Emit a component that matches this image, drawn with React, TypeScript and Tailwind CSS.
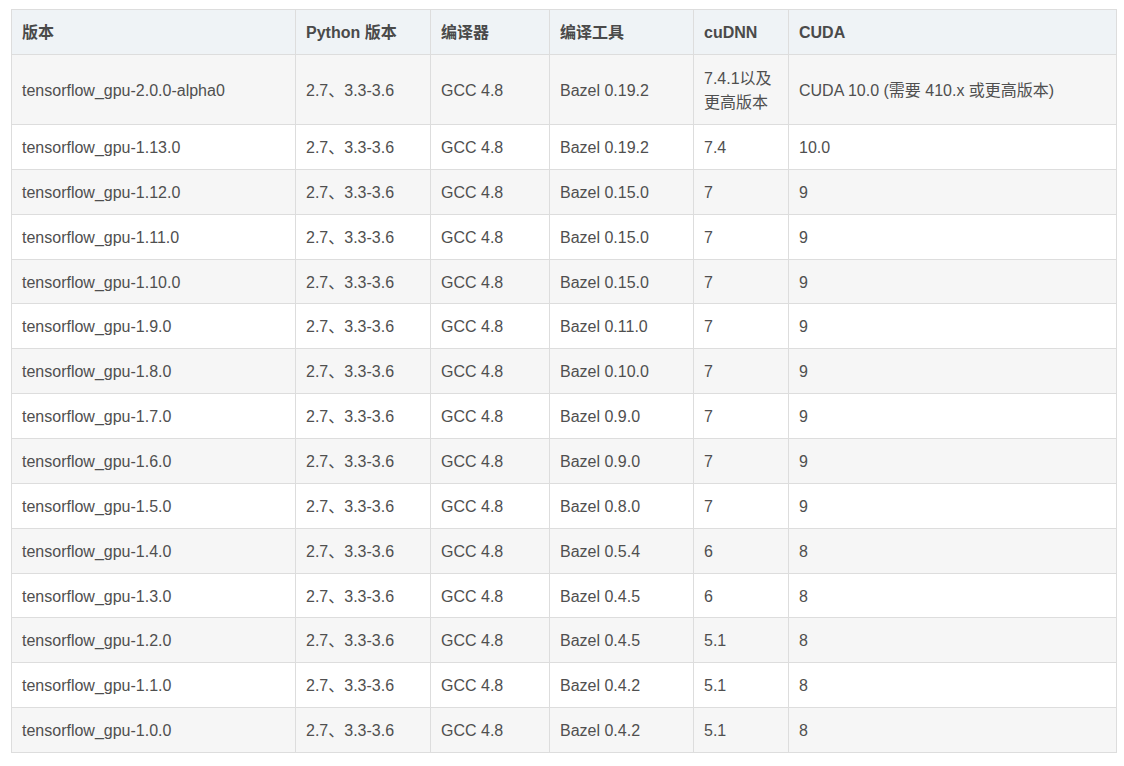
import React from 'react'

const headers = ['版本', 'Python 版本', '编译器', '编译工具', 'cuDNN', 'CUDA']

const rows: string[][] = [
  ['tensorflow_gpu-2.0.0-alpha0', '2.7、3.3-3.6', 'GCC 4.8', 'Bazel 0.19.2', '7.4.1以及更高版本', 'CUDA 10.0 (需要 410.x 或更高版本)'],
  ['tensorflow_gpu-1.13.0', '2.7、3.3-3.6', 'GCC 4.8', 'Bazel 0.19.2', '7.4', '10.0'],
  ['tensorflow_gpu-1.12.0', '2.7、3.3-3.6', 'GCC 4.8', 'Bazel 0.15.0', '7', '9'],
  ['tensorflow_gpu-1.11.0', '2.7、3.3-3.6', 'GCC 4.8', 'Bazel 0.15.0', '7', '9'],
  ['tensorflow_gpu-1.10.0', '2.7、3.3-3.6', 'GCC 4.8', 'Bazel 0.15.0', '7', '9'],
  ['tensorflow_gpu-1.9.0', '2.7、3.3-3.6', 'GCC 4.8', 'Bazel 0.11.0', '7', '9'],
  ['tensorflow_gpu-1.8.0', '2.7、3.3-3.6', 'GCC 4.8', 'Bazel 0.10.0', '7', '9'],
  ['tensorflow_gpu-1.7.0', '2.7、3.3-3.6', 'GCC 4.8', 'Bazel 0.9.0', '7', '9'],
  ['tensorflow_gpu-1.6.0', '2.7、3.3-3.6', 'GCC 4.8', 'Bazel 0.9.0', '7', '9'],
  ['tensorflow_gpu-1.5.0', '2.7、3.3-3.6', 'GCC 4.8', 'Bazel 0.8.0', '7', '9'],
  ['tensorflow_gpu-1.4.0', '2.7、3.3-3.6', 'GCC 4.8', 'Bazel 0.5.4', '6', '8'],
  ['tensorflow_gpu-1.3.0', '2.7、3.3-3.6', 'GCC 4.8', 'Bazel 0.4.5', '6', '8'],
  ['tensorflow_gpu-1.2.0', '2.7、3.3-3.6', 'GCC 4.8', 'Bazel 0.4.5', '5.1', '8'],
  ['tensorflow_gpu-1.1.0', '2.7、3.3-3.6', 'GCC 4.8', 'Bazel 0.4.2', '5.1', '8'],
  ['tensorflow_gpu-1.0.0', '2.7、3.3-3.6', 'GCC 4.8', 'Bazel 0.4.2', '5.1', '8'],
]

export default function App() {
  return (
    <div className="min-h-screen bg-white pl-[11px] pt-[9px] font-['Liberation_Sans','Noto_Sans_CJK_SC',sans-serif] text-[16px] leading-[23.86px] text-[#4f4f4f]">
      <table className="w-[1105px] table-fixed border-collapse">
        <colgroup>
          <col className="w-[284px]" />
          <col className="w-[135px]" />
          <col className="w-[119px]" />
          <col className="w-[144px]" />
          <col className="w-[95px]" />
          <col className="w-[328px]" />
        </colgroup>
        <thead>
          <tr className="h-[45px] bg-[#eff3f6]">
            {headers.map((h) => (
              <th
                key={h}
                className="border border-[#dddddd] px-[10px] pt-[11px] pb-[9px] text-left font-bold text-[#4a4a4a]"
              >
                {h}
              </th>
            ))}
          </tr>
        </thead>
        <tbody>
          {rows.map((row, i) => (
            <tr
              key={row[0]}
              className={i === 0 ? 'h-[70px] bg-[#f6f6f6]' : i % 2 === 0 ? 'bg-[#f6f6f6]' : 'bg-white'}
            >
              {row.map((cell, j) => (
                <td
                  key={j}
                  className="border border-[#dddddd] px-[10px] pt-[11px] pb-[9px] align-middle"
                >
                  {cell}
                </td>
              ))}
            </tr>
          ))}
        </tbody>
      </table>
    </div>
  )
}
